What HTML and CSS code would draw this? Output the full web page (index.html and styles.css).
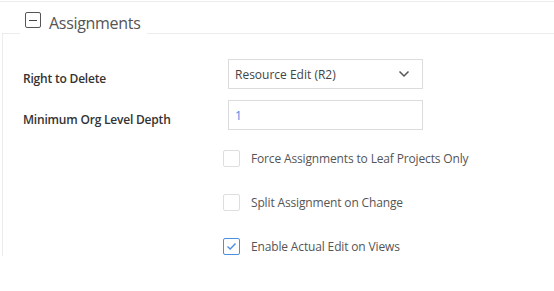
FILE: index.html
```html
<!DOCTYPE html>
<html>
<head>
<meta charset="utf-8">
<link rel="stylesheet" href="styles.css">
</head>
<body>
<div class="topline"></div>
<div class="header">
  <div class="hline-left"></div>
  <div class="title">
    <span class="toggle"><span class="minus"></span></span>
    <span class="title-text">Assignments</span>
  </div>
  <div class="hline-right"></div>
</div>
<div class="section">
  <div class="form-grid">
    <label class="field-label">Right to Delete</label>
    <div class="select">
      <span class="select-value">Resource Edit (R2)</span>
      <svg class="chevron" width="12" height="8" viewBox="0 0 12 8"><path d="M1.5 1.5 L6 6 L10.5 1.5" fill="none" stroke="#555" stroke-width="1.5"/></svg>
    </div>
    <label class="field-label">Minimum Org Level Depth</label>
    <div class="input"><span class="input-value">1</span></div>
  </div>
  <div class="checks">
    <div class="check-row"><span class="box"></span><span class="check-label">Force Assignments to Leaf Projects Only</span></div>
    <div class="check-row"><span class="box"></span><span class="check-label">Split Assignment on Change</span></div>
    <div class="check-row"><span class="box checked"><svg width="11" height="9" viewBox="0 0 11 9"><path d="M1.5 4.5 L4.2 7 L9.5 1.5" fill="none" stroke="#4a90e2" stroke-width="1.4"/></svg></span><span class="check-label">Enable Actual Edit on Views</span></div>
  </div>
</div>
</body>
</html>
```
FILE: styles.css
```css
html, body {
  margin: 0;
  padding: 0;
  background: #fff;
  font-family: "Open Sans", "Noto Sans", sans-serif;
  color: #333;
}
.topline {
  margin-top: 1px;
  border-top: 1px solid #ececec;
}
.header {
  display: flex;
  height: 32px;
  margin-left: 2px;
}
.hline-left {
  width: 18px;
  border-bottom: 1px solid #ececec;
}
.hline-right {
  flex: 1;
  border-bottom: 1px solid #ececec;
}
.title {
  display: flex;
  align-items: center;
  gap: 8px;
  padding: 4px 6px 0 5px;
  box-sizing: border-box;
}
.toggle {
  width: 14px;
  height: 14px;
  border: 1px solid #555;
  border-radius: 2px;
  display: flex;
  align-items: center;
  justify-content: center;
}
.minus {
  width: 8px;
  height: 1px;
  background: #444;
}
.title-text {
  font-size: 16px;
  letter-spacing: -0.3px;
  color: #555;
  line-height: 20px;
  padding-top: 6px;
}
.section {
  margin-left: 2px;
  border-left: 1px solid #ececec;
  padding: 25px 0 1px 20px;
}
.form-grid {
  display: grid;
  grid-template-columns: 205px 195px;
  row-gap: 11px;
  align-items: center;
}
.field-label {
  font-size: 12px;
  font-weight: 600;
  letter-spacing: -0.2px;
  color: #333;
  padding-top: 8px;
}
.select, .input {
  height: 30px;
  box-sizing: border-box;
  border: 1px solid #dcdcdc;
  display: flex;
  align-items: center;
  padding: 0 12px 0 6px;
  font-size: 12px;
}
.select {
  justify-content: space-between;
}
.select-value {
  color: #444;
}
.input-value {
  color: #3a8ee6;
}
.checks {
  margin: 20px 0 0 200px;
  display: flex;
  flex-direction: column;
  gap: 27px;
}
.check-row {
  display: flex;
  align-items: center;
  gap: 11px;
  height: 17px;
}
.box {
  width: 17px;
  height: 17px;
  box-sizing: border-box;
  border: 1px solid #dedede;
  border-radius: 2px;
  display: flex;
  align-items: center;
  justify-content: center;
}
.box.checked {
  border: 1.5px solid #4a90e2;
}
.check-label {
  font-size: 12px;
  letter-spacing: -0.15px;
  color: #555;
}
```
